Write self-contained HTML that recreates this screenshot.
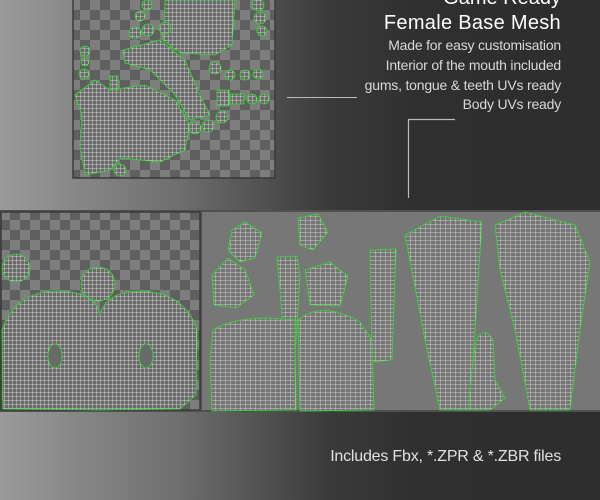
<!DOCTYPE html>
<html><head><meta charset="utf-8"><style>
html,body{margin:0;padding:0}
body{width:600px;height:500px;overflow:hidden;position:relative;background:linear-gradient(90deg,#9a9a9a 0%,#6e6e6e 30%,#3a3a3a 55%,#2f2f2f 70%,#2e2e2e 100%);font-family:"Liberation Sans",sans-serif}
.t{position:absolute;right:39px;text-align:right;color:#e0e0e0;white-space:nowrap}
.h{font-size:20px;color:#fff;letter-spacing:0.3px}
.s{font-size:14px;letter-spacing:-0.2px;color:#d8d8d8}
svg{position:absolute;left:0;top:0}
</style></head><body>
<svg width="600" height="500" viewBox="0 0 600 500">
<defs>
<pattern id="ck" width="20" height="20" patternUnits="userSpaceOnUse">
<rect width="20" height="20" fill="#7e7e7e"/><rect width="10" height="10" fill="#5f5f5f"/><rect x="10" y="10" width="10" height="10" fill="#5f5f5f"/></pattern>
<pattern id="gr" width="4" height="4" patternUnits="userSpaceOnUse">
<rect width="4" height="4" fill="#6a6a6a"/><path d="M0 0H4M0 0V4" stroke="#e8e8e8" stroke-width="0.8"/></pattern>
<pattern id="gr2" width="5" height="4" patternUnits="userSpaceOnUse">
<rect width="5" height="4" fill="#757575"/><path d="M0 0H5M0 0V4" stroke="#e8e8e8" stroke-width="0.7"/></pattern>
</defs>
<rect x="73" y="-2" width="202" height="180" fill="url(#ck)" stroke="#3a3a3a" stroke-width="1.5"/>
<g fill="url(#gr)" stroke="#2ee02e" stroke-width="0.8">
<path d="M165 0 L235 0 L232 45 L215 55 L180 53 L163 40 Z"/>
<path d="M123 50 L160 40 L185 60 L200 95 L210 115 L190 120 L175 95 L150 70 L125 63 Z"/>
<path d="M75 95 L95 80 L110 90 L145 85 L175 100 L190 125 L185 150 L160 162 L120 158 L110 170 L85 175 L80 145 L82 115 Z"/>
<circle cx="148" cy="30" r="6"/><circle cx="140" cy="16" r="5"/><circle cx="147" cy="5" r="5"/><circle cx="135" cy="33" r="6"/><circle cx="165" cy="28" r="6"/>
<circle cx="85" cy="51" r="5"/><circle cx="85" cy="62" r="4"/><circle cx="84" cy="74" r="5"/>
<circle cx="215" cy="68" r="6"/><circle cx="230" cy="75" r="5"/><circle cx="245" cy="75" r="5"/><circle cx="258" cy="74" r="5"/>
<rect x="217" y="90" width="12" height="16"/><rect x="230" y="94" width="14" height="10"/><circle cx="252" cy="99" r="5"/><circle cx="264" cy="99" r="5"/>
<circle cx="195" cy="128" r="6"/><circle cx="208" cy="126" r="6"/><circle cx="222" cy="117" r="6"/>
<circle cx="258" cy="5" r="6"/><circle cx="260" cy="18" r="6"/><circle cx="262" cy="31" r="5"/>
<circle cx="120" cy="170" r="6"/><rect x="110" y="76" width="8" height="14"/>
</g>
<path d="M287 97.5H357" stroke="#bbb" stroke-width="1"/>
<path d="M408.5 198V119.5H455" stroke="#bbb" stroke-width="1.2" fill="none"/>
<rect x="0" y="210" width="600" height="202" fill="#505050"/>
<rect x="1" y="212" width="199" height="198" fill="url(#ck)" stroke="#3a3a3a" stroke-width="1.5"/>
<rect x="202" y="212" width="398" height="198" fill="#777"/>
<g fill="url(#gr)" stroke="#2ee02e" stroke-width="0.8">
<circle cx="16" cy="268" r="14"/><circle cx="98" cy="284" r="17"/>
<path d="M3 409 L2 330 Q15 290 60 291 Q95 292 100 315 Q105 292 140 291 Q185 292 197 330 L196 395 L180 409 L100 410 Z"/>
</g>
<g fill="#6a6a6a" stroke="#2ee02e" stroke-width="0.8"><ellipse cx="55" cy="356" rx="7" ry="12"/><ellipse cx="146" cy="356" rx="7" ry="12"/></g>
<g fill="url(#gr2)" stroke="#2ee02e" stroke-width="0.8">
<path d="M232 230 L245 222 L262 233 L255 258 L240 262 L228 250 Z"/>
<path d="M298 218 L318 214 L328 232 L313 250 L300 245 Z"/>
<path d="M212 275 L228 258 L245 270 L254 295 L236 308 L214 305 Z"/>
<path d="M305 270 L330 262 L348 276 L340 306 L310 305 Z"/>
<path d="M277 257 L297 256 L300 276 L295 357 L285 358 L280 290 Z"/>
<path d="M370 250 L396 249 L392 360 L372 362 Z"/>
<path d="M213 330 Q230 318 270 318 L295 320 L296 410 L212 411 L210 360 Z"/>
<path d="M298 320 Q322 300 360 322 L372 340 L374 410 L300 411 Z"/>
<path d="M405 235 L440 216 L482 222 L475 330 L470 410 L440 410 L425 340 Z"/>
<path d="M495 225 L525 212 L575 225 L590 262 L580 330 L570 410 L530 410 L515 330 L500 270 Z"/>
<path d="M476 340 Q485 325 493 340 L495 380 L505 398 L490 410 L468 410 L472 370 Z"/>
</g>
</svg>
<div class="t" style="top:-13px;font-size:20px;color:#fff">Game Ready</div>
<div class="t h" style="top:12px">Female Base Mesh</div>
<div class="t s" style="top:37px">Made for easy customisation</div>
<div class="t s" style="top:57px">Interior of the mouth included</div>
<div class="t s" style="top:77px">gums, tongue &amp; teeth UVs ready</div>
<div class="t s" style="top:96px">Body UVs ready</div>
<div class="t" style="top:448px;font-size:16px;color:#e0e0e0;letter-spacing:-0.2px">Includes Fbx, *.ZPR &amp; *.ZBR files</div>
</body></html>
